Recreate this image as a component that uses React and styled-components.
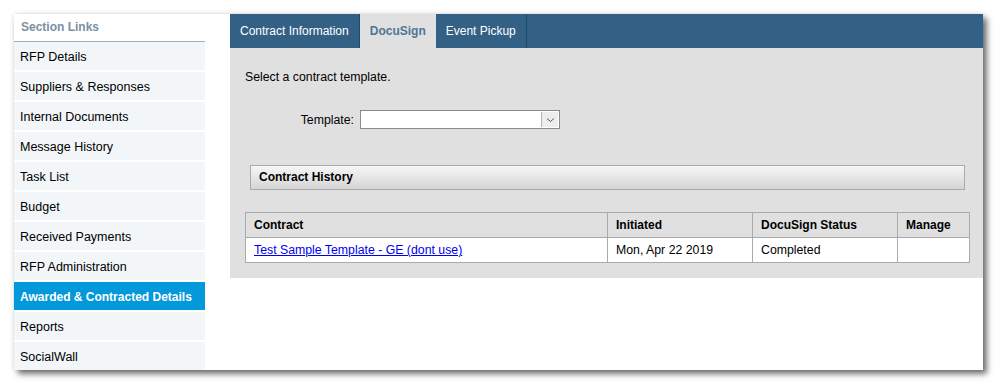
import React from "react";
import styled, { createGlobalStyle } from "styled-components";

const GlobalStyle = createGlobalStyle`
  html, body {
    margin: 0;
    padding: 0;
    background: #ffffff;
    min-height: 100vh;
  }
  body {
    font-family: "Liberation Sans", Arial, sans-serif;
    font-size: 12.3px;
    color: #000;
  }
`;

const Page = styled.div`
  padding: 14px 0 15px 14px;
`;

const Window = styled.div`
  width: 969px;
  height: 356px;
  display: flex;
  background: #ffffff;
  overflow: hidden;
  box-shadow: 4px 4px 6px rgba(0, 0, 0, 0.55), 0 0 5px rgba(0, 0, 0, 0.12);
`;

const Sidebar = styled.nav`
  width: 191px;
  flex-shrink: 0;
  display: flex;
  flex-direction: column;
  gap: 2px;
  margin-right: 25px;
`;

const SidebarHeader = styled.div`
  height: 28px;
  line-height: 27px;
  padding-left: 7px;
  font-size: 12px;
  font-weight: bold;
  color: #7a8fa3;
  border-bottom: 1px solid #9fb0bf;
  margin-bottom: -2px;
`;

const SidebarItem = styled.a`
  display: block;
  height: 27px;
  line-height: 28px;
  padding: 1px 0 0 6px;
  flex-shrink: 0;
  background: ${p => (p.active ? "#0398da" : "#f2f6f8")};
  color: ${p => (p.active ? "#ffffff" : "#000000")};
  font-weight: ${p => (p.active ? "bold" : "normal")};
  font-size: ${p => (p.active ? "12px" : "12.5px")};
  text-decoration: none;
`;

const Main = styled.section`
  flex: 1;
  display: flex;
  flex-direction: column;
`;

const TabBar = styled.div`
  height: 34px;
  display: flex;
  background: #336186;
`;

const Tab = styled.div`
  line-height: 34px;
  padding: ${p => (p.active ? "0 9px 0 10px" : "0 10px")};
  color: ${p => (p.active ? "#4d7596" : "#ffffff")};
  background: ${p => (p.active ? "#e0e0e0" : "transparent")};
  font-weight: ${p => (p.active ? "bold" : "normal")};
  font-size: 12px;
  border-right: 1px solid ${p => (p.active ? "transparent" : "#1f4b6c")};
`;

const Content = styled.div`
  background: #e0e0e0;
  padding: 22px 13px 15px 15px;
  display: flex;
  flex-direction: column;
`;

const Intro = styled.div`
  line-height: 14px;
`;

const FormRow = styled.div`
  margin-top: 26px;
  display: flex;
  align-items: center;
  height: 19px;
`;

const Label = styled.label`
  width: 109px;
  text-align: right;
  margin-right: 6px;
`;

const Select = styled.div`
  width: 198px;
  height: 17px;
  border: 1px solid #8a8a8a;
  background: #ffffff;
  display: flex;
  justify-content: flex-end;
`;

const SelectButton = styled.div`
  width: 16px;
  height: 15px;
  margin: 1px;
  border-left: 1px solid #b4b4b4;
  background: #ededed;
  display: flex;
  align-items: center;
  justify-content: center;
`;

const SectionBar = styled.div`
  margin: 36px 5px 0;
  height: 23px;
  line-height: 23px;
  padding-left: 8px;
  border: 1px solid #aaaaaa;
  background: linear-gradient(to bottom, #f6f6f6 0%, #e6e6e6 50%, #d4d4d4 100%);
  font-size: 12px;
  font-weight: bold;
`;

const Table = styled.table`
  margin-top: 22px;
  width: 100%;
  border-collapse: collapse;
  font-size: 12.3px;
`;

const Th = styled.th`
  height: 24px;
  padding: 0 8px;
  text-align: left;
  font-size: 12px;
  font-weight: bold;
  background: #e0e0e0;
  border: 1px solid #aaaaaa;
  width: ${p => p.w || "auto"};
`;

const Td = styled.td`
  height: 24px;
  padding: 0 8px;
  background: #ffffff;
  border: 1px solid #aaaaaa;
`;

const Link = styled.a`
  color: #0000ee;
  text-decoration: underline;
`;

const menu = [
  "RFP Details",
  "Suppliers & Responses",
  "Internal Documents",
  "Message History",
  "Task List",
  "Budget",
  "Received Payments",
  "RFP Administration",
  "Awarded & Contracted Details",
  "Reports",
  "SocialWall",
];

const tabs = ["Contract Information", "DocuSign", "Event Pickup"];

export default function App() {
  return (
    <>
      <GlobalStyle />
      <Page>
        <Window>
          <Sidebar>
            <SidebarHeader>Section Links</SidebarHeader>
            {menu.map(item => (
              <SidebarItem key={item} active={item === "Awarded & Contracted Details"}>
                {item}
              </SidebarItem>
            ))}
          </Sidebar>
          <Main>
            <TabBar>
              {tabs.map(t => (
                <Tab key={t} active={t === "DocuSign"}>
                  {t}
                </Tab>
              ))}
            </TabBar>
            <Content>
              <Intro>Select a contract template.</Intro>
              <FormRow>
                <Label>Template:</Label>
                <Select>
                  <SelectButton>
                    <svg width="9" height="6" viewBox="0 0 9 6">
                      <path d="M1 1.5 L4.5 4.5 L8 1.5" fill="none" stroke="#555" strokeWidth="1" />
                    </svg>
                  </SelectButton>
                </Select>
              </FormRow>
              <SectionBar>Contract History</SectionBar>
              <Table>
                <thead>
                  <tr>
                    <Th w="345px">Contract</Th>
                    <Th w="128px">Initiated</Th>
                    <Th w="128px">DocuSign Status</Th>
                    <Th>Manage</Th>
                  </tr>
                </thead>
                <tbody>
                  <tr>
                    <Td>
                      <Link href="#">Test Sample Template - GE (dont use)</Link>
                    </Td>
                    <Td>Mon, Apr 22 2019</Td>
                    <Td>Completed</Td>
                    <Td />
                  </tr>
                </tbody>
              </Table>
            </Content>
          </Main>
        </Window>
      </Page>
    </>
  );
}
